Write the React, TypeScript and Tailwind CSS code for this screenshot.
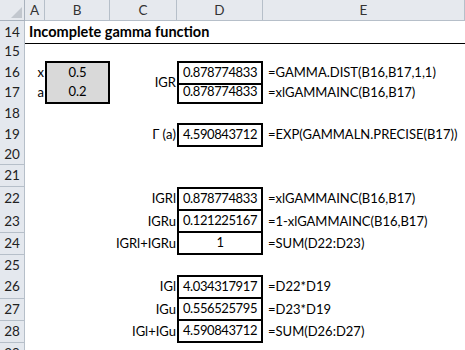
import React from 'react';

const ROWS: { n: number; h: number }[] = [
  { n: 14, h: 20 },
  { n: 15, h: 20 },
  { n: 16, h: 21 },
  { n: 17, h: 21 },
  { n: 18, h: 20 },
  { n: 19, h: 21 },
  { n: 20, h: 21 },
  { n: 21, h: 22 },
  { n: 22, h: 23 },
  { n: 23, h: 23 },
  { n: 24, h: 22 },
  { n: 25, h: 20 },
  { n: 26, h: 24 },
  { n: 27, h: 22 },
  { n: 28, h: 22 },
  { n: 29, h: 20 },
];

type Cell = {
  label?: string;
  value?: string;
  formula?: string;
  border?: 'full' | 'open-top';
};

const DATA: Record<number, Cell> = {
  19: { label: 'Γ (a)', value: '4.590843712', formula: '=EXP(GAMMALN.PRECISE(B17))', border: 'full' },
  22: { label: 'IGRl', value: '0.878774833', formula: '=xlGAMMAINC(B16,B17)', border: 'full' },
  23: { label: 'IGRu', value: '0.121225167', formula: '=1-xlGAMMAINC(B16,B17)', border: 'open-top' },
  24: { label: 'IGRl+IGRu', value: '1', formula: '=SUM(D22:D23)', border: 'open-top' },
  26: { label: 'IGl', value: '4.034317917', formula: '=D22*D19', border: 'full' },
  27: { label: 'IGu', value: '0.556525795', formula: '=D23*D19', border: 'open-top' },
  28: { label: 'IGl+IGu', value: '4.590843712', formula: '=SUM(D26:D27)', border: 'open-top' },
};

const rowHeader = 'flex items-center justify-center bg-[#e4e8ee] border-r border-b border-[#b6bfc9] text-[#222] text-[13.5px]';
const colHeader = 'flex items-center justify-center bg-[#e6e9ee] border-r border-b border-[#b6bfc9] text-[#333] text-[13.5px]';

const App = () => {
  return (
    <div
      className="w-[465px] h-[350px] overflow-hidden bg-white text-black text-[13px]"
      style={{ fontFamily: 'Lato, "Open Sans", sans-serif' }}
    >
      {/* column headers */}
      <div className="grid grid-cols-[25px_20px_65px_67px_86px_1fr] h-[21px]">
        <div className="relative bg-[#e6e9ee] border-r border-b border-[#a9b2bd]">
          <svg className="absolute right-[2px] bottom-[2px]" width="11" height="11" viewBox="0 0 11 11">
            <polygon points="11,0 11,11 0,11" fill="#c2c7ce" />
          </svg>
        </div>
        <div className={colHeader}>A</div>
        <div className={colHeader}>B</div>
        <div className={colHeader}>C</div>
        <div className={colHeader}>D</div>
        <div className={colHeader}>E</div>
      </div>

      {ROWS.map(({ n, h }) => {
        const cell = DATA[n];
        return (
          <div key={n} className="grid grid-cols-[25px_20px_65px_67px_86px_1fr]" style={{ height: h }}>
            <div className={rowHeader}>{n}</div>

            {n === 14 && (
              <div className="col-span-5 flex items-center pl-1 font-bold text-[14.5px] border-b border-black">
                Incomplete gamma function
              </div>
            )}

            {(n === 16 || n === 17) && (
              <>
                <div className="flex items-center justify-end pr-[1px]">{n === 16 ? 'x' : 'a'}</div>
                <div
                  className={`flex items-center justify-center bg-[#d9d9d9] border-black border-x-2 border-b-2 ${
                    n === 16 ? 'border-t-2' : ''
                  }`}
                >
                  {n === 16 ? '0.5' : '0.2'}
                </div>
                <div className="flex items-center justify-end pr-[1px]">
                  {n === 16 ? <span className="translate-y-[10px]">IGR</span> : null}
                </div>
                <div
                  className={`flex items-center justify-center tracking-[-0.4px] border-black border-x-2 border-b-2 ${
                    n === 16 ? 'border-t-2' : ''
                  }`}
                >
                  0.878774833
                </div>
                <div className="flex items-center pl-[5px] whitespace-nowrap">
                  {n === 16 ? '=GAMMA.DIST(B16,B17,1,1)' : '=xlGAMMAINC(B16,B17)'}
                </div>
              </>
            )}

            {cell && (
              <>
                <div />
                <div />
                <div className="flex items-center justify-end pr-[1px] whitespace-nowrap">{cell.label}</div>
                <div
                  className={`flex items-center justify-center tracking-[-0.4px] border-black border-x-2 border-b-2 ${
                    cell.border === 'full' ? 'border-t-2' : ''
                  }`}
                >
                  {cell.value}
                </div>
                <div className="flex items-center pl-[5px] whitespace-nowrap">{cell.formula}</div>
              </>
            )}
          </div>
        );
      })}
    </div>
  );
};

export default App;
